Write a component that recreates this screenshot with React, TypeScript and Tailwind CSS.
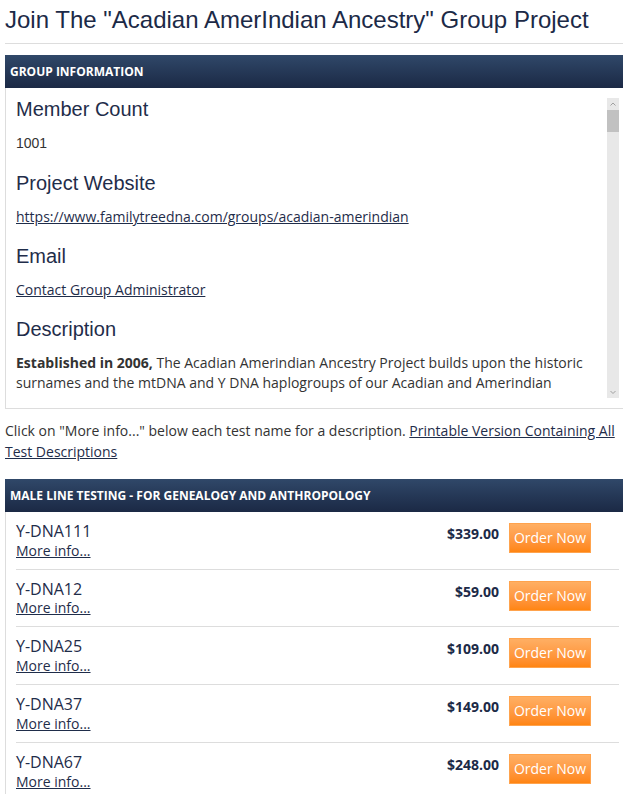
import React from 'react';

const tests = [
    { name: 'Y-DNA111', price: '$339.00' },
    { name: 'Y-DNA12', price: '$59.00' },
    { name: 'Y-DNA25', price: '$109.00' },
    { name: 'Y-DNA37', price: '$149.00' },
    { name: 'Y-DNA67', price: '$248.00' },
    { name: 'Y-DNA500', price: '$449.00' },
];

const PanelHeader: React.FC<{ title: string }> = ({ title }) => (
    <div className="h-[33px] flex items-center px-[5px] bg-gradient-to-b from-[#304869] to-[#1b2945] text-white text-[12px] font-bold font-['Open_Sans',sans-serif] uppercase">
        {title}
    </div>
);

const App: React.FC = () => {
    return (
        <div className="w-[623px] h-[794px] overflow-hidden bg-white">
            <div className="w-[630px] ml-[5px] text-[#1f2d4a]">
                {/* Title */}
                <h1 className="pt-[5px] pb-[8px] text-[24px] leading-[30px] font-['Liberation_Sans',Arial,sans-serif] text-[#1c2a47]">
                    Join The "Acadian AmerIndian Ancestry" Group Project
                </h1>
                <hr className="border-t border-[#dddddd] mb-[11px]" />

                {/* Group information */}
                <PanelHeader title="Group Information" />
                <div className="border-l border-b border-[#dddddd] py-[10px] pl-[10px] pr-[16px]">
                    <div className="h-[300px] flex">
                        <div className="flex-1 overflow-hidden">
                            <h3 className="text-[20px] leading-[22px] font-['Liberation_Sans',Arial,sans-serif] mb-[13px]">Member Count</h3>
                            <p className="text-[14px] leading-[20px] text-[#333] font-['Liberation_Sans',Arial,sans-serif] mb-[19px]">1001</p>
                            <h3 className="text-[20px] leading-[22px] font-['Liberation_Sans',Arial,sans-serif] mb-[13px]">Project Website</h3>
                            <p className="text-[14px] leading-[20px] font-['Open_Sans',sans-serif] mb-[18px]">
                                <a href="#" className="underline text-[#1f2d4a]">https://www.familytreedna.com/groups/acadian-amerindian</a>
                            </p>
                            <h3 className="text-[20px] leading-[22px] font-['Liberation_Sans',Arial,sans-serif] mb-[13px]">Email</h3>
                            <p className="text-[14px] leading-[20px] font-['Open_Sans',sans-serif] mb-[18px]">
                                <a href="#" className="underline text-[#1f2d4a]">Contact Group Administrator</a>
                            </p>
                            <h3 className="text-[20px] leading-[22px] font-['Liberation_Sans',Arial,sans-serif] mb-[13px]">Description</h3>
                            <p className="text-[14px] leading-[20px] text-[#333] font-['Open_Sans',sans-serif] pr-[15px]">
                                <b>Established in 2006,</b> The Acadian Amerindian Ancestry Project builds upon the historic surnames and the mtDNA and Y DNA haplogroups of our Acadian and Amerindian ancestors.
                            </p>
                        </div>
                        {/* scrollbar */}
                        <div className="w-[12px] bg-[#e8e8e8] flex flex-col items-center">
                            <svg width="12" height="12" viewBox="0 0 12 12" className="shrink-0">
                                <path d="M3.5 7.5 L6 5 L8.5 7.5" fill="none" stroke="#a0a0a0" strokeWidth="1" />
                            </svg>
                            <div className="w-[12px] h-[22px] bg-[#c1c1c1]" />
                            <div className="flex-1" />
                            <svg width="12" height="12" viewBox="0 0 12 12" className="shrink-0">
                                <path d="M3.5 5 L6 7.5 L8.5 5" fill="none" stroke="#a0a0a0" strokeWidth="1" />
                            </svg>
                        </div>
                    </div>
                </div>

                {/* Instructions */}
                <p className="pt-[11px] pr-[12px] text-[14px] leading-[21px] text-[#333] font-['Open_Sans',sans-serif]">
                    Click on "More info..." below each test name for a description.{' '}
                    <a href="#" className="underline text-[#1f2d4a]">Printable Version Containing All Test Descriptions</a>
                </p>

                {/* Male line testing */}
                <div className="mt-[17px]">
                    <PanelHeader title="Male Line Testing - For Genealogy and Anthropology" />
                    <div className="border-l border-[#dddddd] pl-[10px] pr-[16px]">
                        {tests.map((t) => (
                            <div key={t.name} className="flex items-start border-b border-[#dddddd] pt-[11px] pb-[8px] font-['Open_Sans',sans-serif]">
                                <div className="flex-1">
                                    <div className="text-[16px] leading-[17.7px] text-[#1f2d4a]">{t.name}</div>
                                    <a href="#" className="block text-[14px] leading-[20px] underline text-[#1f2d4a]">More info...</a>
                                </div>
                                <div className="text-[14px] leading-[22px] font-bold text-[#1c2a47] mr-[10px]">{t.price}</div>
                                <button className="w-[82px] h-[30px] border border-[#ffa34d] bg-gradient-to-b from-[#ffaf63] to-[#ff8510] text-white text-[14px] leading-[20px] font-['Open_Sans',sans-serif] mr-[28px]">
                                    Order Now
                                </button>
                            </div>
                        ))}
                    </div>
                </div>
            </div>
        </div>
    );
};

export default App;
